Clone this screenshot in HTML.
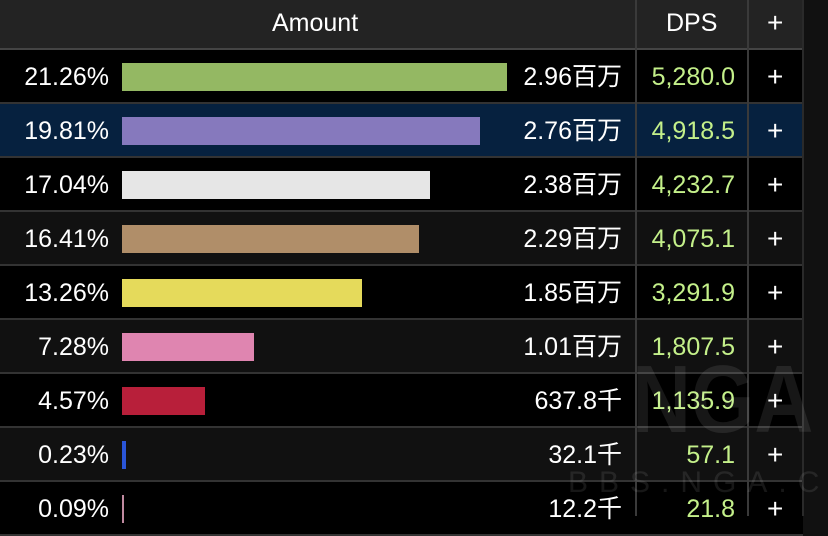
<!DOCTYPE html>
<html><head><meta charset="utf-8"><style>
body{margin:0;width:828px;height:516px;overflow:hidden;background:#111;font-family:"Liberation Sans","Noto Sans CJK SC",sans-serif;color:#fff;position:relative}
.hdr{position:absolute;left:0;top:0;width:803px;height:48px;background:#232323;border-bottom:2px solid #444}
.c{position:absolute;font-size:25px;line-height:54px;white-space:nowrap}
.row{position:absolute;left:0;width:803px;height:52px;border-bottom:2px solid #333}
.vl{position:absolute;top:0;width:2px;height:516px;background:#3a3a3a}
.bar{position:absolute;left:122px;top:13px;height:28px}
.p{right:694px;text-align:right}
.a{right:181px;text-align:right}
.d{right:68px;text-align:right;color:#c4f08a}
.x{left:767px;font-size:28px}
.wm{position:absolute;color:rgba(255,255,255,0.09);font-weight:bold;pointer-events:none;white-space:nowrap}
</style></head><body>
<div class="hdr">
<div class="c" style="left:272px;top:-4px">Amount</div>
<div class="c" style="left:666px;top:-4px">DPS</div>
<div class="c x" style="top:-4px">+</div>
</div>

<div class="row" style="top:50px;background:#000"><div class="c p">21.26%</div><div class="bar" style="width:385px;background:#94b863"></div><div class="c a">2.96百万</div><div class="c d">5,280.0</div><div class="c x">+</div></div>
<div class="row" style="top:104px;background:#06213f"><div class="c p">19.81%</div><div class="bar" style="width:358px;background:#8679bd"></div><div class="c a">2.76百万</div><div class="c d">4,918.5</div><div class="c x">+</div></div>
<div class="row" style="top:158px;background:#000"><div class="c p">17.04%</div><div class="bar" style="width:308px;background:#e6e6e6"></div><div class="c a">2.38百万</div><div class="c d">4,232.7</div><div class="c x">+</div></div>
<div class="row" style="top:212px;background:#111"><div class="c p">16.41%</div><div class="bar" style="width:297px;background:#b08e69"></div><div class="c a">2.29百万</div><div class="c d">4,075.1</div><div class="c x">+</div></div>
<div class="row" style="top:266px;background:#000"><div class="c p">13.26%</div><div class="bar" style="width:240px;background:#e5da5b"></div><div class="c a">1.85百万</div><div class="c d">3,291.9</div><div class="c x">+</div></div>
<div class="row" style="top:320px;background:#111"><div class="c p">7.28%</div><div class="bar" style="width:132px;background:#df85b0"></div><div class="c a">1.01百万</div><div class="c d">1,807.5</div><div class="c x">+</div></div>
<div class="row" style="top:374px;background:#000"><div class="c p">4.57%</div><div class="bar" style="width:83px;background:#b81f3a"></div><div class="c a">637.8千</div><div class="c d">1,135.9</div><div class="c x">+</div></div>
<div class="row" style="top:428px;background:#111"><div class="c p">0.23%</div><div class="bar" style="width:4px;background:#2a55d8"></div><div class="c a">32.1千</div><div class="c d">57.1</div><div class="c x">+</div></div>
<div class="row" style="top:482px;background:#000"><div class="c p">0.09%</div><div class="bar" style="width:2px;background:#c08aa0"></div><div class="c a">12.2千</div><div class="c d">21.8</div><div class="c x">+</div></div>

<div class="vl" style="left:635px"></div>
<div class="vl" style="left:747px"></div>
<div class="vl" style="left:802px;background:#2a2a2a"></div>

<div class="wm" style="left:632px;top:352px;font-size:96px;line-height:96px;transform:scaleX(0.85);transform-origin:left">NGA</div>
<div class="wm" style="left:568px;top:466px;font-size:30px;letter-spacing:11px;font-weight:normal">BBS.NGA.CN</div>
</body></html>
